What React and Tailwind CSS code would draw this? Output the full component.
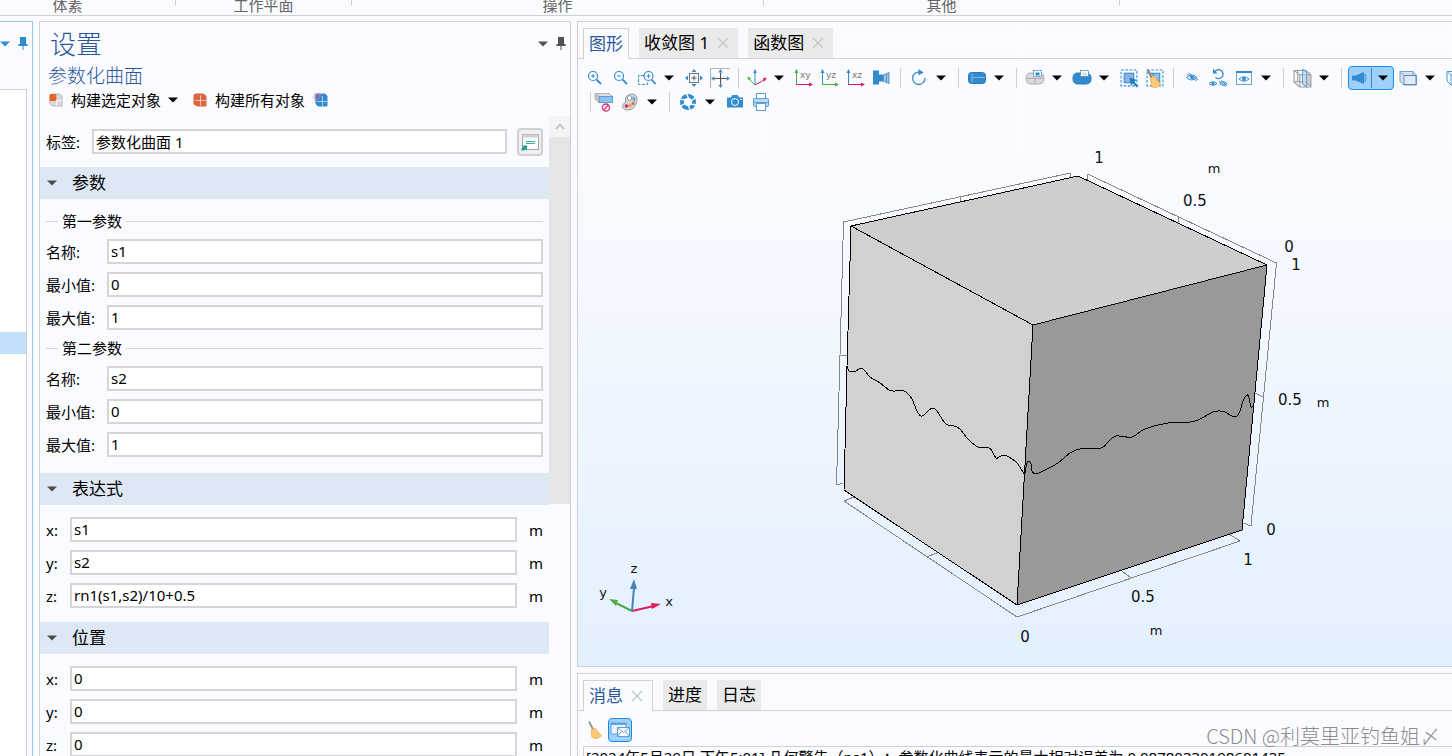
import React, { useId, useState } from 'react';

// Icons

const Icon = ({ children, size = 18 }) => (
  <svg width={size} height={size} viewBox="0 0 18 18" fill="none" className="shrink-0" aria-hidden="true">
    {children}
  </svg>
);

const Caret = ({ className = 'text-black' }) => (
  <svg width="10" height="6" viewBox="0 0 10 6" className={className} aria-hidden="true">
    <path d="M0 0.5h10L5 5.5z" fill="currentColor" />
  </svg>
);

const Pin = () => (
  <svg width="10" height="13" viewBox="0 0 10 13" aria-hidden="true">
    <path d="M2 0h6v7h1.5v2H0.5V7H2z" fill="currentColor" />
    <path d="M5 9v4" stroke="currentColor" />
  </svg>
);

const ZoomIn = () => (
  <Icon>
    <circle cx="7" cy="7" r="4.500" stroke="#338bcf" strokeWidth="1.2" />
    <path d="M5 7h4M7 5v4" stroke="#338bcf" />
    <path d="M10.500 10.500l4.500 4.500" stroke="#338bcf" strokeWidth="1.800" />
  </Icon>
);

const ZoomOut = () => (
  <Icon>
    <circle cx="7" cy="7" r="4.500" stroke="#338bcf" strokeWidth="1.2" />
    <path d="M5 7h4" stroke="#338bcf" />
    <path d="M10.500 10.500l4.500 4.500" stroke="#338bcf" strokeWidth="1.800" />
  </Icon>
);

const ZoomBox = () => (
  <svg width="20" height="18" viewBox="0 0 20 18" fill="none" aria-hidden="true">
    <path d="M7 6.5H1.500v9h9v-4" stroke="#338bcf" strokeDasharray="3 1.500" />
    <circle cx="11.500" cy="7" r="4.500" fill="#fafbff" stroke="#338bcf" strokeWidth="1.2" />
    <path d="M9.500 7h4M11.500 5v4" stroke="#338bcf" />
    <path d="M14.500 10.500l4 4.500" stroke="#338bcf" strokeWidth="1.800" />
  </svg>
);

const ZoomExtents = () => (
  <Icon>
    <rect x="4.500" y="4.500" width="9" height="9" stroke="#777" />
    <path d="M6.500 9h5M9 6.500v5" stroke="#555" />
    <path d="M9 0l2.500 3h-5zM9 18l2.500-3h-5zM0 9l3-2.500v5zM18 9l-3-2.500v5z" fill="#338bcf" />
  </Icon>
);

const ZoomSelected = () => (
  <Icon size={20}>
    <path d="M0.500 18V0.500H18" stroke="#b5b5b8" />
    <path d="M9.500 4v11M4 9.500h11" stroke="#555" />
    <path d="M9.500 1l2 3h-4zM9.500 18l2-3h-4zM1 9.500l3-2v4zM18 9.500l-3-2v4z" fill="#4a86c0" />
  </Icon>
);

const AxesIcon = () => (
  <svg width="22" height="18" viewBox="0 0 22 18" fill="none" aria-hidden="true">
    <path d="M9 16V3" stroke="#338bcf" />
    <path d="M9 0l2 4H7z" fill="#338bcf" />
    <path d="M9 16L3 10" stroke="#4dab45" />
    <path d="M1 7.500l4 1.500-2 2.500z" fill="#4dab45" />
    <path d="M9 16l9-5" stroke="#d81b60" />
    <path d="M21 8.500l-2.500 4-2-3z" fill="#d81b60" />
  </svg>
);

const PlaneIcon = ({ label, up, right }) => (
  <svg width="20" height="18" viewBox="0 0 20 18" fill="none" aria-hidden="true">
    <path d="M2.500 16V3" stroke={up} />
    <path d="M2.500 0l2 4h-4z" fill={up} />
    <path d="M2 15.500h13" stroke={right} />
    <path d="M19 15.500l-4-2v4z" fill={right} />
    <text x="6" y="9" fontSize="9" fill="#777" fontFamily="DejaVu Sans">{label}</text>
  </svg>
);

const ProjectionIcon = () => (
  <Icon>
    <rect x="0" y="1.500" width="6" height="14" fill="#338bcf" />
    <path d="M6 5.500h5v7H6z" fill="#338bcf" />
    <path d="M10.500 6l5.500-2.500v11L10.500 12z" fill="#a9c6e6" stroke="#4c93cc" />
    <path d="M13.500 5v8" stroke="#4c93cc" />
  </Icon>
);

const RotateIcon = () => (
  <Icon>
    <path d="M10 3.200A6.200 6.200 0 1 0 15 9" stroke="#338bcf" strokeWidth="1.300" />
    <path d="M8.500 0l5 3.500-5 3z" fill="#338bcf" />
  </Icon>
);

const CylinderIcon = () => (
  <Icon>
    <rect x="0.500" y="3.500" width="17" height="11" rx="3" fill="#338bcf" stroke="#2b79b8" />
    <path d="M4 8.500h13" stroke="#82b9e4" />
    <path d="M4 4.500v9" stroke="#82b9e4" />
  </Icon>
);

const ShapeIcon = ({ body, top }) => (
  <svg width="20" height="18" viewBox="0 0 20 18" fill="none" aria-hidden="true">
    <rect x="1" y="4" width="18" height="11" rx="4.500" fill={body} stroke={body === '#338bcf' ? '#2b79b8' : '#a9abad'} />
    {body !== '#338bcf' && <path d="M2 9.500h16M10 9v5" stroke="#a9abad" />}
    <rect x="8.500" y="1.500" width="8" height="6" fill="#fff" stroke="#338bcf" strokeDasharray="2 1" />
    <rect x="10.500" y="3.500" width="4" height="3" fill={top} />
  </svg>
);

const SelectBox = () => (
  <Icon size={19}>
    <rect x="1" y="1" width="15" height="15" stroke="#338bcf" strokeDasharray="2.500 1.500" />
    <rect x="4" y="4" width="9" height="9" fill="#8fb0df" stroke="#338bcf" />
    <path d="M9 8l7 2.500-2.500 1.500 4 4-1.500 1.500-4-4L10.500 16z" fill="#1f7fc8" />
  </Icon>
);

const ClearSelect = () => (
  <Icon size={19}>
    <rect x="1" y="1" width="15" height="15" stroke="#338bcf" strokeDasharray="2.500 1.500" />
    <path d="M5 4h8v9z" fill="#8abfeb" stroke="#338bcf" />
    <path d="M1.500 0.500l4 8" stroke="#85888b" strokeWidth="2.200" />
    <path d="M4 9l4-2.500 6 8-4.500 3.500-4-1z" fill="#f9c879" stroke="#eda94b" strokeWidth="0.700" />
  </Icon>
);

const Broom = () => (
  <Icon>
    <path d="M3 0.500l4 8" stroke="#96999c" strokeWidth="2" />
    <path d="M5 9.500l4-2.500 6.500 8-5 3-4.500-1.500z" fill="#f9c879" stroke="#eda94b" strokeWidth="0.700" />
  </Icon>
);

const HideIcon = () => (
  <Icon>
    <path d="M3.500 8.500q5-5 10.500 0q-5.500 5-10.500 0z" stroke="#338bcf" />
    <circle cx="9" cy="8.500" r="1.700" fill="#338bcf" />
    <path d="M4 5l9.500 7M5.500 4l9.500 7" stroke="#338bcf" />
  </Icon>
);

const ResetHide = () => (
  <svg width="20" height="20" viewBox="0 0 20 20" fill="none" aria-hidden="true">
    <path d="M7 3.500A4.500 4.500 0 1 1 7.500 9.500" stroke="#338bcf" strokeWidth="1.300" />
    <path d="M5 0.500v5h4.500z" fill="#338bcf" />
    <path d="M1 15.500q4-3.500 8 0q-4 3.500-8 0z" stroke="#338bcf" />
    <circle cx="5" cy="15.500" r="1.500" fill="#338bcf" />
    <path d="M11.500 15.500q3.500-3.500 7.500 0q-4 3.500-7.500 0z" stroke="#338bcf" />
    <path d="M11 13l7 5.500M13 12.500l6 5" stroke="#338bcf" />
  </svg>
);

const ViewHidden = () => (
  <Icon>
    <rect x="1.500" y="2.500" width="15" height="13" stroke="#6ba8d8" />
    <path d="M1 3h16" stroke="#338bcf" strokeWidth="2" />
    <path d="M4 10q5-4.500 10 0q-5 4.500-10 0z" stroke="#338bcf" />
    <circle cx="9" cy="10" r="1.900" fill="#338bcf" />
  </Icon>
);

const ClipIcon = () => (
  <Icon size={19}>
    <path d="M11 4l6 2v10l-6-2.500z" fill="#cfd0d2" />
    <path d="M1 1.500h11l5 4v11.500H6.500l-5.500-4.500z" stroke="#999" />
    <path d="M1 1.500l5.500 4H17M6.500 5.500V17M4.500 1.500v11M1 12h10l6 4.500" stroke="#999" />
    <path d="M9 0l4 3v14l-4-3z" fill="#b9d7ef" fillOpacity="0.700" stroke="#5b9fd3" />
  </Icon>
);

const Headlight = () => (
  <Icon>
    <path d="M1 6.500h3.500L13 3v12l-8.500-3.500H1z" fill="#338bcf" />
    <path d="M14 5q2.500 4 0 8z" fill="#fff" stroke="#338bcf" strokeWidth="0.800" />
  </Icon>
);

const Transparent = () => (
  <Icon>
    <path d="M1 2.500h13l3.500 4v9.500H5l-4-3.500z" fill="#d6e3f3" stroke="#7f9ec6" />
    <path d="M1 2.500l4 4h12.500M14 2.500V12" stroke="#7f9ec6" />
    <path d="M5 6.500h12v9H5z" fill="#e1ebf7" stroke="#5b87bd" />
  </Icon>
);

const Wireframe = () => (
  <Icon>
    <path d="M1 2.500h12l4 3v10.500H5l-4-4z" stroke="#4c9ad5" />
    <path d="M1 2.500l4 3.500h12M5 6v9.500" stroke="#4c9ad5" />
  </Icon>
);

const NoMaterial = () => (
  <svg width="20" height="20" viewBox="0 0 20 20" fill="none" aria-hidden="true">
    <path d="M1 1.500h14l4 3H5z" fill="#dfe0e1" stroke="#b2b3b5" />
    <path d="M1 1.500l4 3v6.500l-4-4z" fill="#c4c5c7" stroke="#b2b3b5" />
    <rect x="5.500" y="4.500" width="13" height="6" fill="#8bc2ef" stroke="#5b9fd3" />
    <circle cx="12" cy="15.500" r="3.500" stroke="#d6336c" strokeWidth="1.300" />
    <path d="M14.500 13L9.500 18" stroke="#d6336c" strokeWidth="1.300" />
  </svg>
);

const Palette = () => (
  <Icon>
    <path d="M9 1.500c4-1.500 7.500 1 7 5.500s-3 10-9 10c-5 0-6.500-3-5-5.500S5 10 4.500 7 5.500 2.500 9 1.500z" fill="#d5d6d8" stroke="#9a9c9f" />
    <circle cx="8.500" cy="5" r="2.300" fill="#fff" stroke="#999" />
    <path d="M12 3.500l2.500 1.500-1 4-2-2z" fill="#5ba5e0" />
    <circle cx="12" cy="10.500" r="1.600" fill="#e8622c" />
    <circle cx="9" cy="12.500" r="1.600" fill="#f39a2c" />
    <circle cx="5.500" cy="13" r="1.700" fill="#d81b60" />
  </Icon>
);

const Aperture = () => (
  <Icon>
    <circle cx="9" cy="9" r="6" stroke="#338bcf" strokeWidth="4" />
    <path d="M7 0l3 6M16.500 4.500L11.500 8.500M18 12l-7-1M11.500 18L9 12M1.500 13.500L6.500 10M0 6l7 1" stroke="#fafbff" strokeWidth="1.400" />
    <circle cx="9" cy="9" r="3.800" fill="#fafbff" />
  </Icon>
);

const Camera = () => (
  <Icon>
    <path d="M1 4.500h4L6.500 2h5L13 4.500h4v10H1z" fill="#338bcf" />
    <circle cx="9" cy="9" r="3.500" fill="#338bcf" stroke="#fff" />
    <path d="M14 6.500h2" stroke="#fff" />
  </Icon>
);

const Printer = () => (
  <svg width="18" height="20" viewBox="0 0 18 20" fill="none" aria-hidden="true">
    <rect x="4.500" y="1.500" width="9" height="6" fill="#fff" stroke="#5b9fd3" />
    <rect x="1.500" y="6.500" width="15" height="8" rx="1" fill="#bdd7f0" stroke="#5b9fd3" />
    <path d="M2 10.500h14" stroke="#5b9fd3" />
    <rect x="4.500" y="11.500" width="9" height="7" fill="#fff" stroke="#5b9fd3" />
  </svg>
);

const BlockIcon = ({ base, edge, line, accent }) => (
  <svg width="14" height="14" viewBox="0 0 14 14" fill="none" aria-hidden="true">
    <path d="M2 1h8l3 2v10H4L1 11V2z" fill={base} stroke={edge} strokeLinejoin="round" />
    <path d="M7.500 2.500v10M2 7.500h11" stroke={line} />
    {accent && <rect x="0.500" y="1" width="7" height="7" rx="1.500" fill={accent} />}
  </svg>
);

const MeshBlock = () => (
  <svg width="14" height="14" viewBox="0 0 14 14" fill="none" aria-hidden="true">
    <path d="M3 1h8l2 2v10H4L2 11V2z" fill="#338bcf" stroke="#338bcf" />
    <path d="M8.500 3v10M3 8.500h10" stroke="#a9d0ef" />
    <path d="M1 1h5v2.500L4 6.500H1z" stroke="#e86a92" />
  </svg>
);

const NoteIcon = () => (
  <Icon>
    <rect x="1.500" y="1.500" width="16" height="15" fill="#fff" stroke="#a2a3a5" />
    <path d="M1.500 3h16" stroke="#cfd0d2" strokeWidth="3" />
    <path d="M5 8.500h9M5 10.500h9" stroke="#36b39a" />
    <path d="M0.500 17.500v-2l2-1.500L1 12.500h5v5L4.500 16 3 17.500z" fill="#17a589" />
  </Icon>
);

const MailIcon = () => (
  <svg width="20" height="16" viewBox="0 0 20 16" fill="none" aria-hidden="true">
    <rect x="1" y="1" width="15" height="11" fill="#eaf5fe" stroke="#5ba5e0" />
    <path d="M1 2h15" stroke="#5ba5e0" strokeWidth="2" />
    <rect x="7.500" y="5.500" width="12" height="9" fill="#fff" stroke="#5b9fd3" />
    <path d="M7.500 5.500l6 5 6-5M7.500 14.500l4-5M19.500 14.500l-4-5" stroke="#5b9fd3" />
  </svg>
);

// Small controls

const ToolButton = ({ title, children }) => (
  <button type="button" title={title} className="flex h-6 w-[26px] shrink-0 items-center justify-center">
    {children}
  </button>
);

const MenuButton = ({ title }) => (
  <button type="button" title={title} className="flex h-6 w-[21px] shrink-0 items-center justify-center pr-[3px]">
    <Caret />
  </button>
);

const Divider = () => (
  <div className="flex h-5 w-[11px] shrink-0 justify-center">
    <div className="w-px bg-[#cfd0d4]" />
  </div>
);

const inputClass =
  'h-[25px] min-w-0 flex-1 border-2 border-[#d4d5d8] bg-white px-[2px] pb-px text-[15px] leading-5 text-black outline-none';

const Field = ({ label, value, unit }) => {
  const id = useId();
  return (
    <div className="flex items-center">
      <label htmlFor={id} className={unit ? 'w-6' : 'w-[61px]'}>{label}</label>
      <input id={id} type="text" defaultValue={value} className={inputClass} />
      {unit && <span className="w-[26px] pl-3">{unit}</span>}
    </div>
  );
};

const Group = ({ title, children }) => (
  <fieldset className="flex flex-col gap-2">
    <legend className="mb-2 flex h-5 w-full items-center gap-1">
      <span className="h-px w-3 bg-[#d4d5d8]" />
      <span>{title}</span>
      <span className="h-px flex-1 bg-[#d4d5d8]" />
    </legend>
    {children}
  </fieldset>
);

const Section = ({ title, children }) => {
  const [open, setOpen] = useState(true);
  return (
    <section>
      <h3>
        <button
          type="button"
          aria-expanded={open}
          onClick={() => setOpen(!open)}
          className="flex h-8 w-full items-center gap-[15px] bg-[#dee8f4] pl-[7px] text-[17px]"
        >
          <Caret className="text-[#4a4a4a]" />
          {title}
        </button>
      </h3>
      {open && children}
    </section>
  );
};

const Tab = ({ label, active, closable }) => (
  <div
    className={
      active
        ? '-mb-px flex h-[31px] items-center gap-2 border border-b-0 border-[#d0d1d6] bg-[#fafbff] px-[5px] text-[#2a579a]'
        : 'flex h-[30px] items-center gap-2 bg-[#eaeaea] px-[5px] text-black'
    }
  >
    <button type="button" role="tab" aria-selected={!!active} className="text-[17px] leading-6">
      {label}
    </button>
    {closable && (
      <button type="button" aria-label={`关闭${label}`} className="flex w-4 justify-start">
        <svg width="12" height="12" viewBox="0 0 12 12" aria-hidden="true">
          <path d="M1 1l10 10M11 1l-10 10" stroke="#c6cad2" strokeWidth="1.500" />
        </svg>
      </button>
    )}
  </div>
);

// Page parts

const ribbonGroups = [
  { name: '体素', width: 'w-[176px] pr-10' },
  { name: '工作平面', width: 'w-[176px]' },
  { name: '操作', width: 'w-[412px]' },
  { name: '其他', width: 'w-[356px]' },
];

const Ribbon = () => (
  <header className="flex h-4 shrink-0 items-start overflow-hidden border-b border-[#cfd0d4] text-[15px] leading-[10px] text-[#666]">
    {ribbonGroups.map((g) => (
      <div key={g.name} className={`h-1.5 shrink-0 border-r border-[#cfd0d4] text-center ${g.width}`}>
        {g.name}
      </div>
    ))}
  </header>
);

const TreePane = () => (
  <aside className="flex w-[33px] shrink-0 flex-col border-t border-r border-[#8ec8f5] pr-[5px] text-[#338bcf]">
    <div className="flex h-[67px] items-start gap-2 pt-[15px]">
      <button type="button" title="菜单" className="pt-1"><Caret className="text-[#338bcf]" /></button>
      <button type="button" title="固定"><Pin /></button>
    </div>
    <div className="flex-1 border-t border-r border-[#cfd0d4] bg-white pt-[242px]">
      <div className="h-[22px] bg-[#bfdffb]" />
    </div>
  </aside>
);

const SettingsPanel = () => (
  <main className="flex w-[532px] shrink-0 flex-col border border-b-0 border-[#cfd0d4] text-[15px] leading-5">
    <div className="flex items-start justify-between pt-1 pr-1 pl-[10px]">
      <h1 className="text-[26px] leading-9 font-light text-[#2a579a]">设置</h1>
      <div className="flex items-center gap-2 pt-[11px] text-[#505256]">
        <button type="button" title="菜单"><Caret className="text-[#505256]" /></button>
        <button type="button" title="固定"><Pin /></button>
      </div>
    </div>
    <h2 className="pt-0.5 pl-2 text-[19px] leading-6 font-light text-[#2a579a]">参数化曲面</h2>
    <div className="flex h-7 items-center pb-1 pl-[9px]">
      <button type="button" className="flex items-center gap-2">
        <BlockIcon base="#d9dadb" edge="#b9babc" line="#fafafa" accent="#e8622c" />
        构建选定对象
      </button>
      <button type="button" title="构建选项" className="pl-[7px]"><Caret /></button>
      <button type="button" className="ml-[15px] flex items-center gap-2">
        <BlockIcon base="#dc6440" edge="#dc6440" line="#f5c4b4" />
        构建所有对象
      </button>
      <button type="button" title="构建网格" className="pl-[9px]"><MeshBlock /></button>
    </div>
    <div className="flex min-h-0 flex-1">
      <div className="min-w-0 flex-1 overflow-hidden">
        <div className="flex h-[51px] items-center px-1.5">
          <label htmlFor="label-input" className="w-[46px]">标签:</label>
          <input id="label-input" type="text" defaultValue="参数化曲面 1" className={inputClass} />
          <button
            type="button"
            title="显示说明"
            className="ml-[10px] flex h-7 w-[26px] items-center justify-center rounded-sm border-2 border-[#cfd0d4] bg-[#f0f0f0]"
          >
            <NoteIcon />
          </button>
        </div>

        <Section title="参数">
          <div className="flex flex-col gap-2 px-1.5 pt-3 pb-4">
            <Group title="第一参数">
              <Field label="名称:" value="s1" />
              <Field label="最小值:" value="0" />
              <Field label="最大值:" value="1" />
            </Group>
            <Group title="第二参数">
              <Field label="名称:" value="s2" />
              <Field label="最小值:" value="0" />
              <Field label="最大值:" value="1" />
            </Group>
          </div>
        </Section>

        <Section title="表达式">
          <div className="flex flex-col gap-2 px-1.5 pt-3 pb-[14px]">
            <Field label="x:" value="s1" unit="m" />
            <Field label="y:" value="s2" unit="m" />
            <Field label="z:" value="rn1(s1,s2)/10+0.5" unit="m" />
          </div>
        </Section>

        <Section title="位置">
          <div className="flex flex-col gap-2 px-1.5 pt-3 pb-[14px]">
            <Field label="x:" value="0" unit="m" />
            <Field label="y:" value="0" unit="m" />
            <Field label="z:" value="0" unit="m" />
          </div>
        </Section>
      </div>
      <div className="flex w-[21px] shrink-0 flex-col">
        <button type="button" title="向上滚动" className="flex h-[21px] items-center justify-center bg-[#f3f4f6]">
          <svg width="10" height="7" viewBox="0 0 10 7" fill="none" aria-hidden="true">
            <path d="M1 6l4-4.500L9 6" stroke="#bfc0c2" strokeWidth="1.800" />
          </svg>
        </button>
        <div className="h-[367px] bg-[#e4e5e7]" />
      </div>
    </div>
  </main>
);

const axisLabels = [
  { x: 1099, y: 163, text: '1' },
  { x: 1195, y: 206, text: '0.5' },
  { x: 1289, y: 252, text: '0' },
  { x: 1296, y: 270, text: '1' },
  { x: 1290, y: 405, text: '0.5' },
  { x: 1271, y: 535, text: '0' },
  { x: 1248, y: 565, text: '1' },
  { x: 1143, y: 602, text: '0.5' },
  { x: 1025, y: 642, text: '0' },
];

const unitLabels = [
  { x: 1214, y: 173, text: 'm' },
  { x: 1323, y: 407, text: 'm' },
  { x: 1156, y: 635, text: 'm' },
  { x: 634, y: 573, text: 'z' },
  { x: 603, y: 597, text: 'y' },
  { x: 669, y: 606, text: 'x' },
];

// Where the rough surface meets the two front faces
const leftProfile = [
  [847, 366], [849, 371], [852, 372], [856, 371], [861, 368], [865, 371], [870, 377], [880, 383],
  [889, 390], [893, 391], [904, 391], [908, 394], [912, 399], [917, 411], [921, 416], [925, 414],
  [929, 410], [933, 408], [937, 411], [944, 422], [948, 425], [954, 426], [960, 429], [968, 439],
  [978, 447], [989, 448], [992, 451], [996, 458], [999, 457], [1004, 455], [1009, 457], [1017, 463],
  [1024, 474],
];

const rightProfile = [
  [1025, 473], [1027, 463], [1029, 461], [1031, 464], [1032, 471], [1036, 474], [1047, 469],
  [1058, 463], [1070, 453], [1080, 449], [1101, 448], [1108, 442], [1116, 436], [1132, 437],
  [1145, 429], [1168, 423], [1190, 422], [1198, 420], [1213, 412], [1220, 411], [1225, 412],
  [1232, 416], [1237, 416], [1240, 411], [1243, 401], [1247, 395], [1249, 398], [1251, 407],
  [1253, 406],
];

const smoothPath = (pts) => {
  let d = `M${pts[0][0]} ${pts[0][1]}`;
  for (let i = 0; i < pts.length - 1; i++) {
    const p0 = pts[i - 1] || pts[i];
    const p1 = pts[i];
    const p2 = pts[i + 1];
    const p3 = pts[i + 2] || p2;
    d += `C${p1[0] + (p2[0] - p0[0]) / 6} ${p1[1] + (p2[1] - p0[1]) / 6} `;
    d += `${p2[0] - (p3[0] - p1[0]) / 6} ${p2[1] - (p3[1] - p1[1]) / 6} ${p2[0]} ${p2[1]}`;
  }
  return d;
};

const GeometryPlot = () => (
  <svg viewBox="578 116 874 550" className="block h-full w-full" role="img" aria-label="几何图形">
    <g shapeRendering="crispEdges" strokeLinejoin="round">
      <path d="M851 226L1078 176L1267 265L1033 325z" fill="#cecece" />
      <path d="M851 226L1033 325L1017 605L844 490z" fill="#d1d1d1" />
      <path d="M1033 325L1267 265L1242 530L1017 605z" fill="#999" />
      <g fill="none" stroke="#868686">
        <path d="M1070.500 177V173L843.500 222L840 355L836.500 485L843 483M960.500 197V202M840 355.500H847" />
        <path d="M854 497L844 501L1017 617L1240 541L1229 534M926 557L937 553M1131 578L1122 571" />
        <path d="M1087.500 180V174L1276.500 263L1251 526L1243 523M1178.500 217V222M1255 393L1263 397" />
      </g>
      <g fill="none" stroke="#000">
        <path d="M851 226L1078 176L1267 265L1242 530L1017 605L844 490L847 366z" />
        <path d="M851 226L1033 325L1267 265M1033 325L1017 605" />
        <path d={smoothPath(leftProfile)} />
        <path d={smoothPath(rightProfile)} />
      </g>
    </g>
    <g fill="none" strokeWidth="2">
      <path d="M632 611L614 602" stroke="#50aa46" />
      <path d="M632 611L654 606" stroke="#dc1c5c" />
      <path d="M632 611L634 588" stroke="#4482bb" />
    </g>
    <path d="M609 599L618 600L616 606z" fill="#50aa46" />
    <path d="M661 604L651 603L652 609z" fill="#dc1c5c" />
    <path d="M634 579L637 589H630z" fill="#4482bb" />
    <g fontFamily="DejaVu Sans, sans-serif" textAnchor="middle" fill="#111">
      {axisLabels.map((l) => (
        <text key={`${l.x}-${l.y}`} x={l.x} y={l.y} fontSize="15">{l.text}</text>
      ))}
      {unitLabels.map((l) => (
        <text key={`${l.x}-${l.y}`} x={l.x} y={l.y} fontSize="13">{l.text}</text>
      ))}
    </g>
  </svg>
);

const GraphicsPanel = () => (
  <section className="flex min-h-0 flex-1 flex-col border border-r-0 border-[#cfd0d4] bg-linear-to-b from-[#fafbff] from-20% to-[#e3f0fe]">
    <div role="tablist" className="flex h-[37px] shrink-0 items-end gap-[10px] border-b border-[#cfd0d4] pl-[5px]">
      <Tab label="图形" active />
      <Tab label="收敛图 1" closable />
      <Tab label="函数图" closable />
    </div>
    <div className="flex h-[33px] shrink-0 items-center overflow-hidden pt-[5px] pl-1">
      <ToolButton title="放大"><ZoomIn /></ToolButton>
      <ToolButton title="缩小"><ZoomOut /></ToolButton>
      <ToolButton title="缩放框"><ZoomBox /></ToolButton>
      <MenuButton title="缩放选项" />
      <ToolButton title="缩放到窗口大小"><ZoomExtents /></ToolButton>
      <ToolButton title="自动缩放"><ZoomSelected /></ToolButton>
      <Divider />
      <ToolButton title="默认视图"><AxesIcon /></ToolButton>
      <MenuButton title="视图选项" />
      <ToolButton title="xy 视图"><PlaneIcon label="xy" up="#4dab45" right="#d81b60" /></ToolButton>
      <ToolButton title="yz 视图"><PlaneIcon label="yz" up="#338bcf" right="#4dab45" /></ToolButton>
      <ToolButton title="xz 视图"><PlaneIcon label="xz" up="#338bcf" right="#d81b60" /></ToolButton>
      <ToolButton title="投影"><ProjectionIcon /></ToolButton>
      <Divider />
      <ToolButton title="旋转"><RotateIcon /></ToolButton>
      <MenuButton title="旋转选项" />
      <Divider />
      <ToolButton title="选择对象"><CylinderIcon /></ToolButton>
      <MenuButton title="选择选项" />
      <Divider />
      <ToolButton title="选择边界"><ShapeIcon body="#d9dadb" top="#338bcf" /></ToolButton>
      <MenuButton title="边界选项" />
      <ToolButton title="选择域"><ShapeIcon body="#338bcf" top="#d9dadb" /></ToolButton>
      <MenuButton title="域选项" />
      <ToolButton title="框选"><SelectBox /></ToolButton>
      <ToolButton title="清除选择"><ClearSelect /></ToolButton>
      <Divider />
      <ToolButton title="隐藏"><HideIcon /></ToolButton>
      <ToolButton title="重置隐藏"><ResetHide /></ToolButton>
      <ToolButton title="查看隐藏"><ViewHidden /></ToolButton>
      <MenuButton title="隐藏选项" />
      <Divider />
      <ToolButton title="裁剪"><ClipIcon /></ToolButton>
      <MenuButton title="裁剪选项" />
      <Divider />
      <div className="mr-px ml-px flex h-6 w-[46px] shrink-0 items-center rounded-sm border border-[#1a8ae8] bg-[#9fd0f9]">
        <button type="button" title="场景光" className="flex h-5 w-[23px] items-center justify-center border-r border-[#338bcf]">
          <Headlight />
        </button>
        <button type="button" title="场景光选项" className="flex h-5 flex-1 items-center justify-center"><Caret /></button>
      </div>
      <ToolButton title="透明"><Transparent /></ToolButton>
      <MenuButton title="透明选项" />
      <ToolButton title="线框"><Wireframe /></ToolButton>
    </div>
    <div className="ml-3 flex h-5 shrink-0 items-center border-l border-[#cfd0d4]">
      <ToolButton title="材料颜色"><NoMaterial /></ToolButton>
      <ToolButton title="颜色"><Palette /></ToolButton>
      <MenuButton title="颜色选项" />
      <Divider />
      <ToolButton title="环境"><Aperture /></ToolButton>
      <MenuButton title="环境选项" />
      <ToolButton title="图像快照"><Camera /></ToolButton>
      <ToolButton title="打印"><Printer /></ToolButton>
    </div>
    <div className="min-h-0 flex-1 pt-1">
      <GeometryPlot />
    </div>
  </section>
);

const MessagesPanel = () => (
  <section className="flex h-[83px] shrink-0 flex-col overflow-hidden border-t border-l border-[#cfd0d4]">
    <div role="tablist" className="flex h-[37px] shrink-0 items-end gap-[10px] border-b border-[#cfd0d4] pl-[5px]">
      <Tab label="消息" active closable />
      <Tab label="进度" />
      <Tab label="日志" />
    </div>
    <div className="flex h-[35px] shrink-0 items-center gap-1 pt-0.5 pl-2">
      <button type="button" title="清除" className="w-[18px]"><Broom /></button>
      <button
        type="button"
        title="消息通知"
        className="flex h-6 w-6 items-center justify-center rounded-sm border border-[#1a8ae8] bg-[#9fd0f9]"
      >
        <MailIcon />
      </button>
    </div>
    <div
      role="log"
      className="ml-[5px] flex-1 border-t border-l border-[#cfd0d4] pl-0.5 text-[15px] leading-5 whitespace-nowrap [text-spacing-trim:space-all]"
    >
      [2024年5月29日 下午5:01] 几何警告（ps1）：参数化曲线表示的最大相对误差为 0.08780330198601435.
    </div>
  </section>
);

export default function App() {
  return (
    <div className="relative flex h-screen flex-col overflow-hidden bg-[#fafbff] font-['Noto_Sans','Noto_Sans_CJK_SC',sans-serif] text-black">
      <Ribbon />
      <div className="flex min-h-0 flex-1 gap-1.5 pt-[5px]">
        <TreePane />
        <SettingsPanel />
        <div className="flex min-w-0 flex-1 flex-col gap-1.5">
          <GraphicsPanel />
          <MessagesPanel />
        </div>
      </div>
      <div className="pointer-events-none absolute right-3 bottom-1.5 font-['Noto_Sans_CJK_SC',sans-serif] text-[20px] leading-7 font-light text-[#8c8c8c]">
        CSDN @利莫里亚钓鱼姐〆
      </div>
    </div>
  );
}
